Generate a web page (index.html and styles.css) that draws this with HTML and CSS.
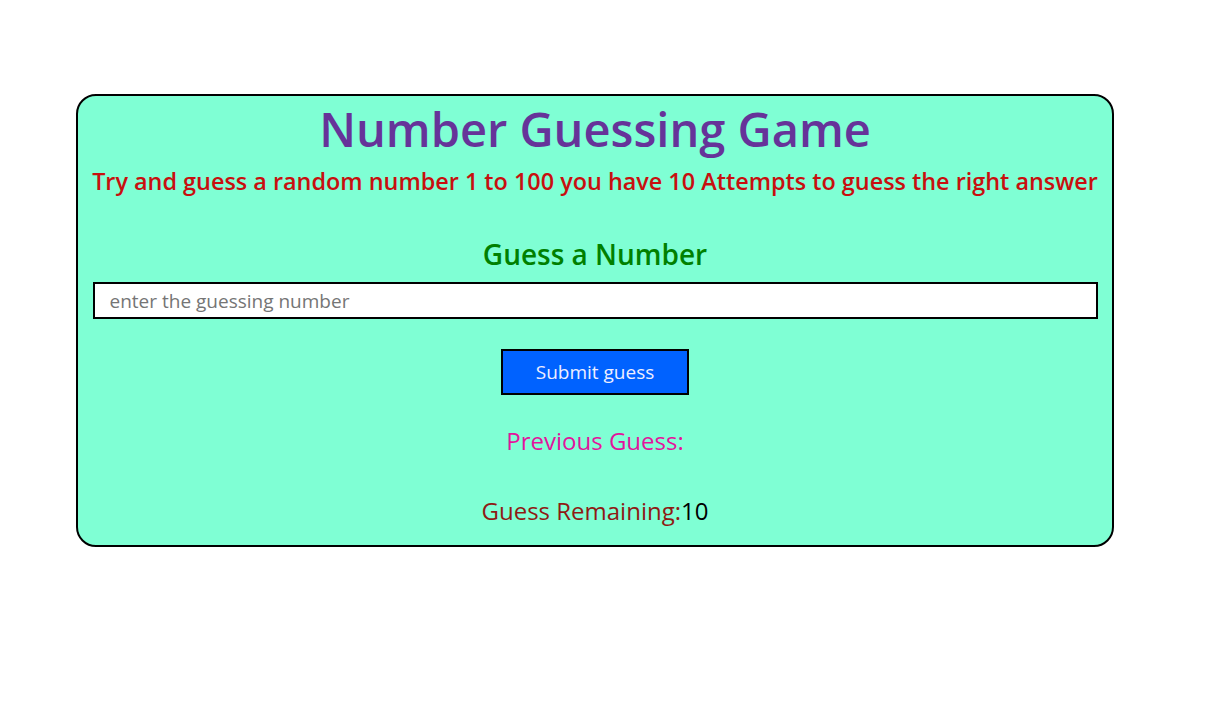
FILE: index.html
```html
<!DOCTYPE html>
<html lang="en">
<head>
    <meta charset="UTF-8">
    <meta name="viewport" content="width=device-width, initial-scale=1.0">
    <title>Number Guessing Game</title>
    <link rel="stylesheet" href="styles.css">
</head>
<body>

    <div class="game">
        <h1 class="title">Number Guessing Game</h1>
        <p class="intro">Try and guess a random number 1 to 100 you have 10 Attempts to guess the right answer</p>

        <label class="guess-label" for="guessField">Guess a Number</label>
        <input type="text" id="guessField" class="guess-field" placeholder="enter the guessing number">

        <button class="submit-btn" id="subt">Submit guess</button>

        <p class="prev">Previous Guess:<span class="guesses"></span></p>
        <p class="remaining">Guess Remaining:<span class="last-result">10</span></p>
    </div>

</body>
</html>
```

FILE: styles.css
```css
body { margin: 0; font-family: "Open Sans", "Noto Sans", sans-serif; background: white; }
.game { box-sizing: border-box; width: 1038px; margin: 94px 0 0 76px; padding: 0 15px 19px; background-color: aquamarine; border: 2px solid black; border-radius: 20px; display: flex; flex-direction: column; align-items: center; text-align: center; }
.title { margin: 3px 0 0; font-size: 47px; font-weight: 600; color: rebeccapurple; line-height: 60px; }
.intro { margin: 7px 0 0; font-size: 23.4px; font-weight: 600; color: #c80f0f; line-height: 30px; white-space: nowrap; }
.guess-label { margin-top: 43px; font-size: 28px; font-weight: 600; color: green; line-height: 30px; }
.guess-field { box-sizing: border-box; width: calc(100% + 1px); height: 37px; margin-top: 13px; padding: 0 15px; border: 2px solid black; font-family: inherit; font-size: 19px; outline: none; }
.guess-field::placeholder { color: #757575; }
.submit-btn { box-sizing: border-box; width: 188px; height: 46px; margin-top: 30px; background-color: #0062ff; color: #eef; border: 2px solid black; font-family: inherit; font-size: 19px; cursor: pointer; }
.prev { margin: 31px 0 0; font-size: 24px; color: #e2149c; line-height: 30px; }
.remaining { margin: 40px 0 0; font-size: 24px; color: #8e1a14; line-height: 30px; }
.last-result { color: black; }
```
